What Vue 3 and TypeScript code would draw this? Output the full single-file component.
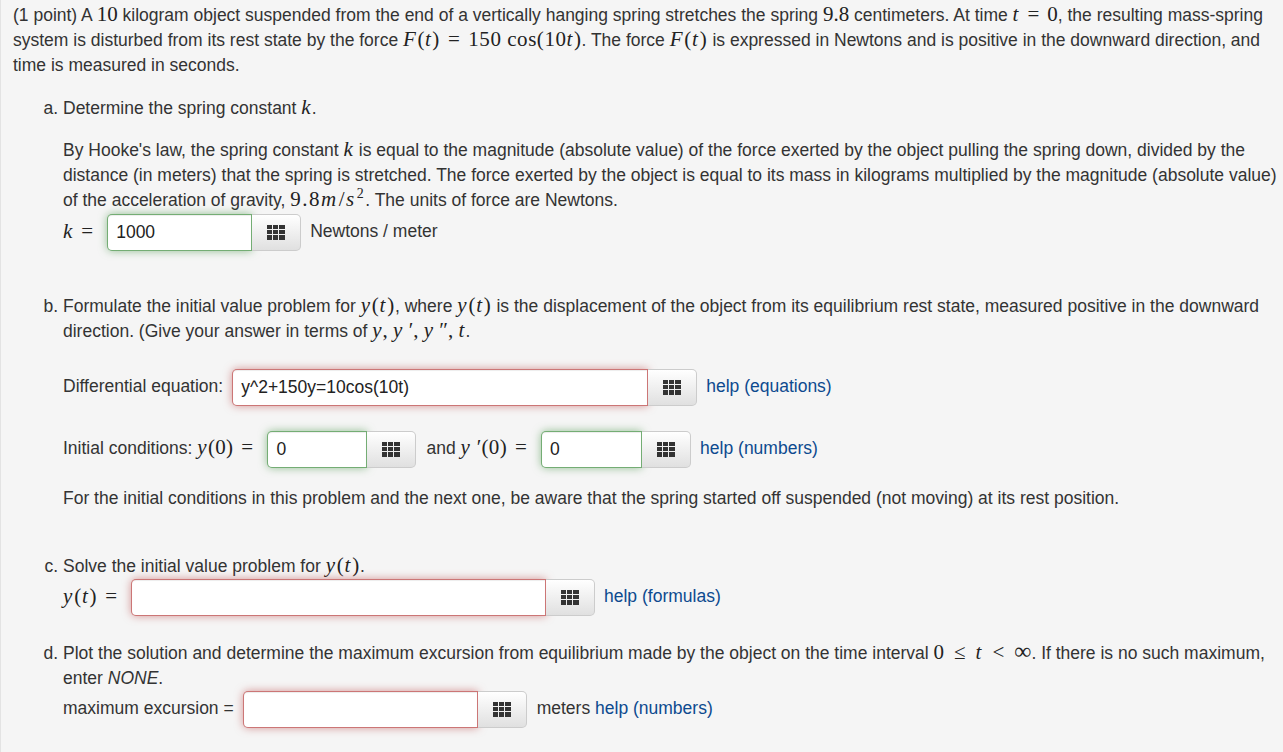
<template>
  <main class="problem">
    <p class="intro">
      (1 point) A <span class="m">10</span> kilogram object suspended from the end of a vertically hanging spring stretches the spring <span class="m">9.8</span> centimeters. At time <span class="m"><i>t</i><b>=</b>0</span>, the resulting mass-spring system is disturbed from its rest state by the force <span class="m force"><i>F</i>(<i>t</i>)<b>=</b>150 cos(10<i>t</i>)</span>. The force <span class="m fn"><i>F</i>(<i>t</i>)</span> is expressed in Newtons and is positive in the downward direction, and time is measured in seconds.
    </p>

    <ol class="parts">
      <li class="part part-a">
        <div>Determine the spring constant <span class="m"><i>k</i></span>.</div>
        <p class="explain">
          By Hooke's law, the spring constant <span class="m"><i>k</i></span> is equal to the magnitude (absolute value) of the force exerted by the object pulling the spring down, divided by the distance (in meters) that the spring is stretched. The force exerted by the object is equal to its mass in kilograms multiplied by the magnitude (absolute value) of the acceleration of gravity, <span class="m gravity">9.8<i>m</i>/<i>s</i><sup>2</sup></span>. The units of force are Newtons.
        </p>
        <div class="row row-k">
          <span class="m"><i>k</i><b>=</b></span>
          <span class="answer correct" style="--w: 145px">
            <input readonly value="1000" />
            <button type="button"><svg width="18" height="15" viewBox="0 0 18 15"><path d="M0 0h5v4H0zM6 0h5v4H6zM12 0h6v4h-6zM0 5h5v4H0zM6 5h5v4H6zM12 5h6v4h-6zM0 10h5v5H0zM6 10h5v5H6zM12 10h6v5h-6z" fill="#333" /></svg></button>
          </span>
          <span>Newtons / meter</span>
        </div>
      </li>

      <li class="part part-b">
        <div>Formulate the initial value problem for <span class="m fn"><i>y</i>(<i>t</i>)</span>, where <span class="m fn"><i>y</i>(<i>t</i>)</span> is the displacement of the object from its equilibrium rest state, measured positive in the downward direction. (Give your answer in terms of <span class="m"><i>y</i>, <i>y</i> ′, <i>y</i> ″, <i>t</i></span>.</div>
        <div class="row row-de">
          <span>Differential equation:</span>
          <span class="answer incorrect" style="--w: 416px">
            <input readonly value="y^2+150y=10cos(10t)" />
            <button type="button"><svg width="18" height="15" viewBox="0 0 18 15"><path d="M0 0h5v4H0zM6 0h5v4H6zM12 0h6v4h-6zM0 5h5v4H0zM6 5h5v4H6zM12 5h6v4h-6zM0 10h5v5H0zM6 10h5v5H6zM12 10h6v5h-6z" fill="#333" /></svg></button>
          </span>
          <a href="#">help (equations)</a>
        </div>
        <div class="row row-ic">
          <span>Initial conditions: <span class="m"><i>y</i>(0)<b>=</b></span></span>
          <span class="answer correct" style="--w: 100px">
            <input readonly value="0" />
            <button type="button"><svg width="18" height="15" viewBox="0 0 18 15"><path d="M0 0h5v4H0zM6 0h5v4H6zM12 0h6v4h-6zM0 5h5v4H0zM6 5h5v4H6zM12 5h6v4h-6zM0 10h5v5H0zM6 10h5v5H6zM12 10h6v5h-6z" fill="#333" /></svg></button>
          </span>
          <span class="and">and <span class="m"><i>y</i> ′(0)<b>=</b></span></span>
          <span class="answer correct" style="--w: 101px">
            <input readonly value="0" />
            <button type="button"><svg width="18" height="15" viewBox="0 0 18 15"><path d="M0 0h5v4H0zM6 0h5v4H6zM12 0h6v4h-6zM0 5h5v4H0zM6 5h5v4H6zM12 5h6v4h-6zM0 10h5v5H0zM6 10h5v5H6zM12 10h6v5h-6z" fill="#333" /></svg></button>
          </span>
          <a href="#">help (numbers)</a>
        </div>
        <p class="note">For the initial conditions in this problem and the next one, be aware that the spring started off suspended (not moving) at its rest position.</p>
      </li>

      <li class="part part-c">
        <div>Solve the initial value problem for <span class="m fn"><i>y</i>(<i>t</i>)</span>.</div>
        <div class="row row-y">
          <span class="m fn"><i>y</i>(<i>t</i>)<b>=</b></span>
          <span class="answer incorrect" style="--w: 415px">
            <input readonly value="" />
            <button type="button"><svg width="18" height="15" viewBox="0 0 18 15"><path d="M0 0h5v4H0zM6 0h5v4H6zM12 0h6v4h-6zM0 5h5v4H0zM6 5h5v4H6zM12 5h6v4h-6zM0 10h5v5H0zM6 10h5v5H6zM12 10h6v5h-6z" fill="#333" /></svg></button>
          </span>
          <a href="#">help (formulas)</a>
        </div>
      </li>

      <li class="part part-d">
        <div>Plot the solution and determine the maximum excursion from equilibrium made by the object on the time interval <span class="m interval">0<b>≤</b><i>t</i><b>&lt;</b><span class="inf">∞</span></span>. If there is no such maximum, enter <em>NONE</em>.</div>
        <div class="row">
          <span>maximum excursion =</span>
          <span class="answer incorrect" style="--w: 235px">
            <input readonly value="" />
            <button type="button"><svg width="18" height="15" viewBox="0 0 18 15"><path d="M0 0h5v4H0zM6 0h5v4H6zM12 0h6v4h-6zM0 5h5v4H0zM6 5h5v4H6zM12 5h6v4h-6zM0 10h5v5H0zM6 10h5v5H6zM12 10h6v5h-6z" fill="#333" /></svg></button>
          </span>
          <span class="and">meters <a href="#">help (numbers)</a></span>
        </div>
      </li>
    </ol>
  </main>
</template>

<script setup lang="ts">
</script>

<style>
html,
body {
  margin: 0;
  background: #f5f5f5;
}
</style>

<style scoped>
.problem {
  box-sizing: border-box;
  min-height: 752px;
  padding: 3px 4px 0 12px;
  border-left: 1px solid #e3e3e3;
  background: #f5f5f5;
  color: #333;
  font: 17.5px/25px "Liberation Sans", Arial, sans-serif;
}

.intro {
  margin: 0;
}

.m {
  font-family: "Liberation Serif", "Times New Roman", serif;
  font-size: 21px;
  line-height: 1;
  color: #222;
}

.m b {
  margin: 0 8px;
  font-weight: 400;
}

.m i {
  margin-right: 1px;
}

.m sup {
  font-size: 14px;
  line-height: 0;
}

.force {
  letter-spacing: 0.55px;
}

.fn {
  letter-spacing: 0.8px;
}

.gravity {
  letter-spacing: 1.5px;
}

.interval b {
  margin: 0 10px;
}

.inf {
  font-size: 24px;
}

.parts {
  margin: 18px 0 0;
  padding: 0 0 0 50px;
  list-style: lower-alpha;
}

.explain {
  margin: 17px 0 0;
}

.row {
  display: flex;
  align-items: center;
  gap: 9px;
  height: 37px;
}

.row > :not(.answer) {
  margin-bottom: 2px;
}

.row .m b {
  margin-right: 5px;
}

.row-k {
  margin-top: 1px;
}

.row-ic .m {
  letter-spacing: 0.3px;
}

.row-y .m b {
  margin-right: 4px;
}

.and {
  margin-left: 1px;
}

.answer {
  display: inline-flex;
  height: 37px;
}

.answer input {
  box-sizing: border-box;
  width: var(--w);
  height: 37px;
  padding: 0 8px;
  border: 1px solid #ccc;
  border-radius: 5px 0 0 5px;
  outline: none;
  background: #fff;
  color: #222;
  font: 17.5px "Liberation Sans", Arial, sans-serif;
}

.correct input {
  border-color: rgba(81, 153, 81, 0.8);
  box-shadow: inset 0 1px 1px rgba(0, 0, 0, 0.075), 0 0 8px rgba(81, 153, 81, 0.6);
}

.incorrect input {
  border-color: rgba(191, 84, 84, 0.8);
  box-shadow: inset 0 1px 1px rgba(0, 0, 0, 0.075), 0 0 8px rgba(191, 84, 84, 0.6);
}

.answer button {
  display: flex;
  align-items: center;
  justify-content: center;
  box-sizing: border-box;
  width: 49px;
  height: 37px;
  padding: 0;
  border: 1px solid #ccc;
  border-left: 0;
  border-radius: 0 5px 5px 0;
  background: linear-gradient(#fff, #e0e0e0);
}

a {
  color: #0d4a8f;
  text-decoration: none;
}

.part-b {
  margin-top: 43px;
}

.row-de {
  margin-top: 25px;
}

.row-ic {
  margin-top: 25px;
}

.note {
  margin: 18px 0 0;
}

.part-c {
  margin-top: 43px;
}

.part-d {
  margin-top: 23px;
}
</style>
